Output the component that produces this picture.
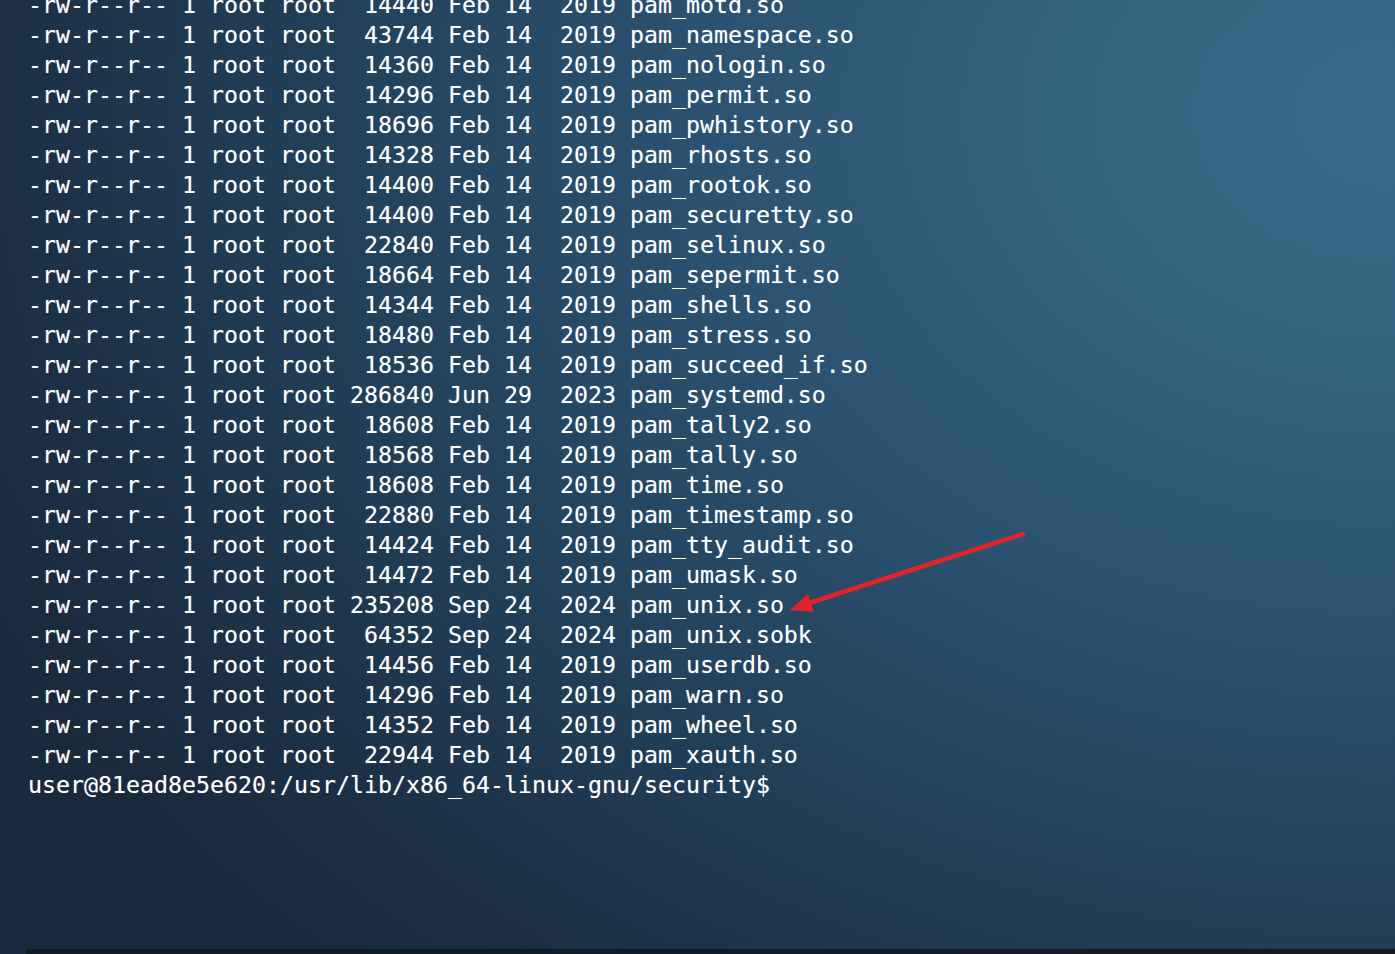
const rows = [
    ["14440", "Feb 14", "2019", "pam_motd.so"],
    ["43744", "Feb 14", "2019", "pam_namespace.so"],
    ["14360", "Feb 14", "2019", "pam_nologin.so"],
    ["14296", "Feb 14", "2019", "pam_permit.so"],
    ["18696", "Feb 14", "2019", "pam_pwhistory.so"],
    ["14328", "Feb 14", "2019", "pam_rhosts.so"],
    ["14400", "Feb 14", "2019", "pam_rootok.so"],
    ["14400", "Feb 14", "2019", "pam_securetty.so"],
    ["22840", "Feb 14", "2019", "pam_selinux.so"],
    ["18664", "Feb 14", "2019", "pam_sepermit.so"],
    ["14344", "Feb 14", "2019", "pam_shells.so"],
    ["18480", "Feb 14", "2019", "pam_stress.so"],
    ["18536", "Feb 14", "2019", "pam_succeed_if.so"],
    ["286840", "Jun 29", "2023", "pam_systemd.so"],
    ["18608", "Feb 14", "2019", "pam_tally2.so"],
    ["18568", "Feb 14", "2019", "pam_tally.so"],
    ["18608", "Feb 14", "2019", "pam_time.so"],
    ["22880", "Feb 14", "2019", "pam_timestamp.so"],
    ["14424", "Feb 14", "2019", "pam_tty_audit.so"],
    ["14472", "Feb 14", "2019", "pam_umask.so"],
    ["235208", "Sep 24", "2024", "pam_unix.so"],
    ["64352", "Sep 24", "2024", "pam_unix.sobk"],
    ["14456", "Feb 14", "2019", "pam_userdb.so"],
    ["14296", "Feb 14", "2019", "pam_warn.so"],
    ["14352", "Feb 14", "2019", "pam_wheel.so"],
    ["22944", "Feb 14", "2019", "pam_xauth.so"],
];

function Arrow() {
    return (
        <svg
            className="absolute left-0 top-0 pointer-events-none"
            width="1395"
            height="954"
            viewBox="0 0 1395 954"
        >
            <line
                x1="1023"
                y1="534"
                x2="806"
                y2="604"
                stroke="#e3232b"
                strokeWidth="4.5"
                strokeLinecap="round"
            />
            <polygon points="790,610 808,594 814,612" fill="#e3232b" />
        </svg>
    );
}

export default function App() {
    return (
        <div className="relative h-[954px] w-full overflow-hidden bg-[radial-gradient(ellipse_1550px_1150px_at_100%_12%,#3c6a88_0%,#35627f_22%,#2b5270_45%,#223f58_70%,#1c2f44_90%,#1a2a3c_100%)]">
            <div className="-mt-[10px] pl-[28px] font-['DejaVu_Sans_Mono',monospace] text-[23.25px] leading-[30px] text-white whitespace-pre [text-shadow:0_0_1px_rgba(255,255,255,0.35)]">
                {rows.map((r, i) => (
                    <div key={i}>
                        {`-rw-r--r-- 1 root root ${r[0].padStart(6, " ")} ${r[1]}  ${r[2]} ${r[3]}`}
                    </div>
                ))}
                <div>user@81ead8e5e620:/usr/lib/x86_64-linux-gnu/security$</div>
            </div>
            <div className="absolute bottom-0 left-[26px] right-0 h-[5px] bg-[#121b25]" />
            <Arrow />
        </div>
    );
}
